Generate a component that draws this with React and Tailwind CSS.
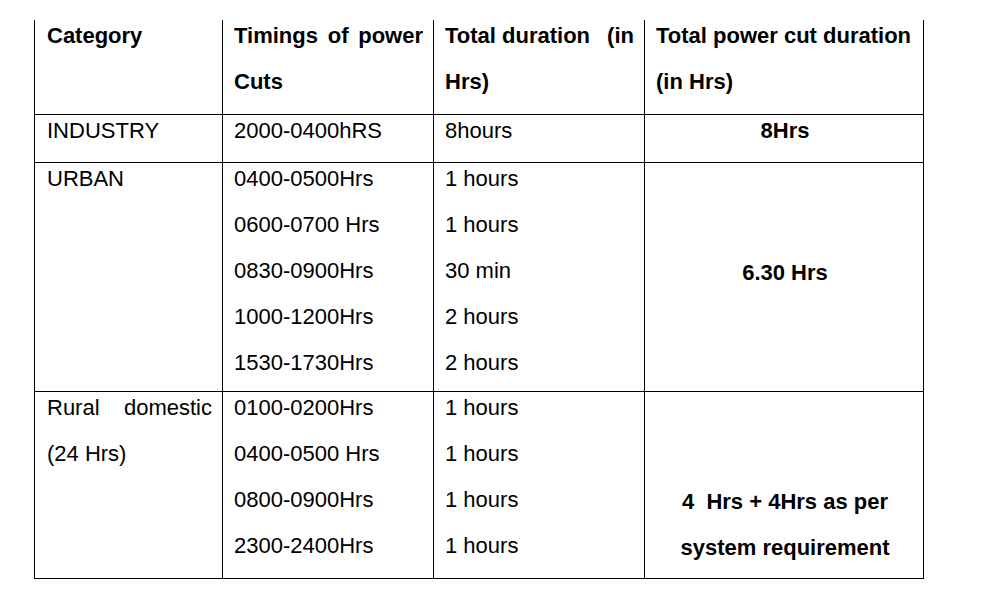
import React from 'react';

// Each text line sits in a 46px slot, text near the top (like Word "exact" spacing)
function Line({ children, className = '' }) {
  return <div className={`h-[46px] leading-[32px] whitespace-pre ${className}`}>{children}</div>;
}

// Justified line: words spread edge to edge
function Spread({ words, className = '' }) {
  return (
    <div className={`h-[46px] leading-[32px] flex justify-between whitespace-pre ${className}`}>
      {words.map((w, i) => (
        <span key={i}>{w}</span>
      ))}
    </div>
  );
}

const cell = 'border-r border-b border-black pl-[12px] pr-[10px]';

export default function App() {
  return (
    <div
      className="w-[990px] h-[599px] bg-white text-[22px] text-black"
      style={{ fontFamily: '"Liberation Sans", Arial, sans-serif' }}
    >
      <div className="pt-[20px] pl-[34px]">
        <div className="w-[890px] border-l border-black grid grid-cols-[188px_211px_211px_279px] grid-rows-[95px_48px_229px_187px]">
          {/* Header */}
          <div className={`${cell} font-bold`}>
            <Line>Category</Line>
          </div>
          <div className={`${cell} font-bold !pl-[11px]`}>
            <Spread words={['Timings', 'of', 'power']} />
            <Line>Cuts</Line>
          </div>
          <div className={`${cell} font-bold !pl-[11px]`}>
            <Spread words={['Total duration', '(in']} />
            <Line>Hrs)</Line>
          </div>
          <div className={`${cell} font-bold !pl-[11px]`}>
            <Line>Total power cut duration</Line>
            <Line>(in Hrs)</Line>
          </div>

          {/* Industry */}
          <div className={cell}>
            <Line>INDUSTRY</Line>
          </div>
          <div className={`${cell} !pl-[11px]`}>
            <Line>2000-0400hRS</Line>
          </div>
          <div className={`${cell} !pl-[11px]`}>
            <Line>8hours</Line>
          </div>
          <div className={`${cell} font-bold text-center`}>
            <Line>8Hrs</Line>
          </div>

          {/* Urban */}
          <div className={cell}>
            <Line>URBAN</Line>
          </div>
          <div className={`${cell} !pl-[11px]`}>
            <Line>0400-0500Hrs</Line>
            <Line>0600-0700 Hrs</Line>
            <Line>0830-0900Hrs</Line>
            <Line>1000-1200Hrs</Line>
            <Line>1530-1730Hrs</Line>
          </div>
          <div className={`${cell} !pl-[11px]`}>
            <Line>1 hours</Line>
            <Line>1 hours</Line>
            <Line>30 min</Line>
            <Line>2 hours</Line>
            <Line>2 hours</Line>
          </div>
          <div className={`${cell} font-bold text-center pt-[94px]`}>
            <Line>6.30 Hrs</Line>
          </div>

          {/* Rural */}
          <div className={cell}>
            <Spread words={['Rural', 'domestic']} />
            <Line>(24 Hrs)</Line>
          </div>
          <div className={`${cell} !pl-[11px]`}>
            <Line>0100-0200Hrs</Line>
            <Line>0400-0500 Hrs</Line>
            <Line>0800-0900Hrs</Line>
            <Line>2300-2400Hrs</Line>
          </div>
          <div className={`${cell} !pl-[11px]`}>
            <Line>1 hours</Line>
            <Line>1 hours</Line>
            <Line>1 hours</Line>
            <Line>1 hours</Line>
          </div>
          <div className={`${cell} font-bold text-center pt-[94px]`}>
            <Line>4  Hrs + 4Hrs as per</Line>
            <Line>system requirement</Line>
          </div>
        </div>
      </div>
    </div>
  );
}
